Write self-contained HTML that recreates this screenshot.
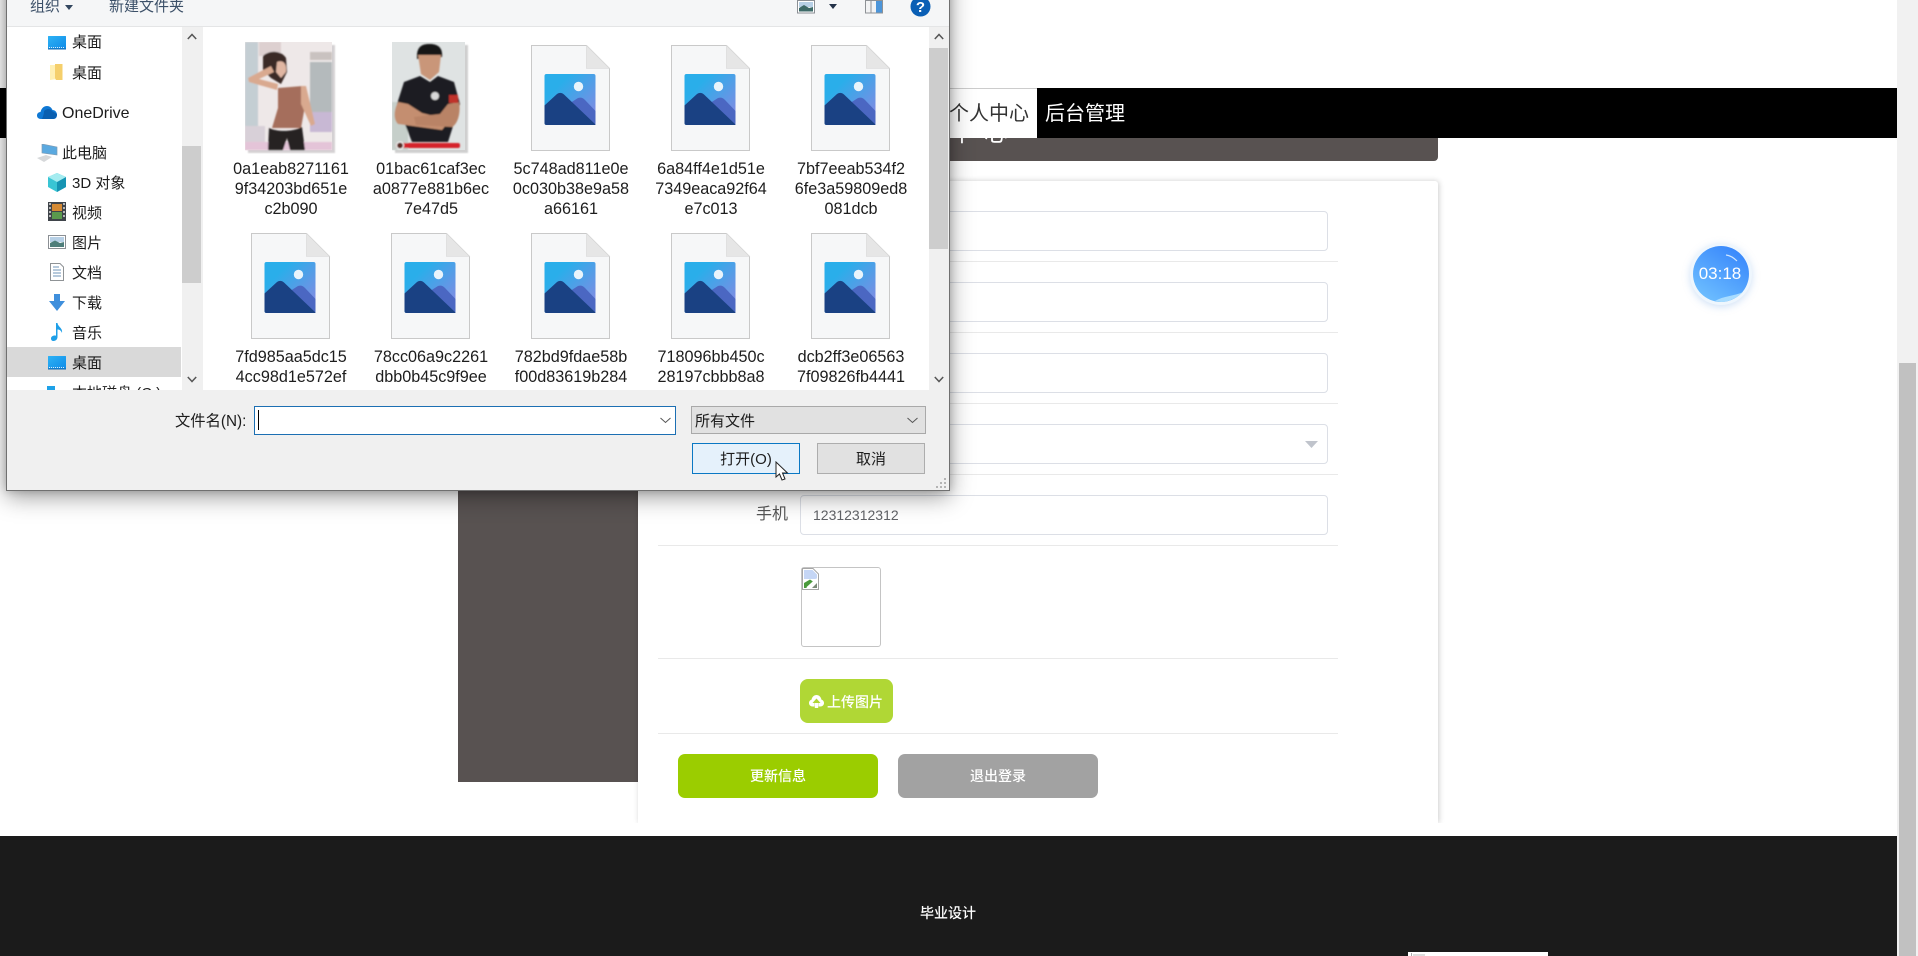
<!DOCTYPE html>
<html lang="zh"><head><meta charset="utf-8"><title>上传</title>
<style>
html,body{margin:0;padding:0;width:1918px;height:956px;overflow:hidden;background:#fff}
body{position:relative;font-family:"Liberation Sans","Noto Sans CJK SC",sans-serif;color:#222}
div,span,svg{position:absolute;box-sizing:border-box}
.t{white-space:nowrap}
.line{left:658px;width:680px;height:1px;background:#e9e9e9}
.inp{left:800px;width:528px;height:40px;border:1px solid #dcdfe6;border-radius:4px;background:#fff}
.side{left:72px;font-size:15px;line-height:22px;height:22px;color:#1c1c1c;white-space:nowrap}
.fn{width:140px;text-align:center;font-size:16.2px;line-height:20px;color:#1d1d1d;white-space:nowrap}
</style></head><body>
<svg width="0" height="0" style="left:0;top:0">
<defs>
<linearGradient id="sq" x1="0" y1="0" x2="1" y2="1"><stop offset=".25" stop-color="#2aaeea"/><stop offset="1" stop-color="#8f85e2"/></linearGradient>
<linearGradient id="dsk" x1="0" y1="0" x2="1" y2="1"><stop offset="0" stop-color="#2db2f5"/><stop offset="1" stop-color="#0f8be8"/></linearGradient>
<linearGradient id="tm" x1=".8" y1="0" x2=".15" y2="1"><stop offset="0" stop-color="#3685fb"/><stop offset="1" stop-color="#71c2ff"/></linearGradient>
<filter id="b1" x="-5%" y="-5%" width="110%" height="110%"><feGaussianBlur stdDeviation=".9"/></filter>
<symbol id="file" viewBox="0 0 80 106"><path d="M.5.5H55.5L78.5 23.5V105.5H.5Z" fill="#f6f7f8" stroke="#c9c9c9"/><path d="M55.5.5V23.5H78.5Z" fill="#e6e6e6" stroke="#d8d8d8" stroke-width=".6"/><rect x="13.500" y="29" width="51" height="51" rx="2" fill="url(#sq)"/><circle cx="47.500" cy="41.500" r="4.700" fill="#e9f4fb"/><path d="M47 53C50 52 52 53 54 55L64.500 66V78C64.500 79 64 80 62 80H50L36 60Z" fill="#4b67c2"/><path d="M13.500 60.500L26 49C28.500 47.500 30.500 47.500 33 49.500L64.500 79.500V80H15.500C14 80 13.500 79 13.500 78Z" fill="#1a4183"/></symbol>
<symbol id="desk" viewBox="0 0 18 14"><rect width="18" height="13" rx=".5" fill="url(#dsk)"/><path d="M1 11.500h16" stroke="#d4eeff" stroke-width="1" stroke-dasharray="1 1"/><rect y="12.400" width="18" height="1.100" fill="#1069b4"/></symbol>
</defs></svg>

<!-- page nav -->
<div style="left:0;top:88px;width:1897px;height:50px;background:#000"></div>
<div style="left:900px;top:88px;width:137px;height:50px;background:#fff;border-top:1px solid #ccc"></div>
<div class="t" style="left:949px;top:99px;font-size:20px;line-height:30px;color:#333">个人中心</div>
<div class="t" style="left:1045px;top:99px;font-size:20px;line-height:30px;color:#fff">后台管理</div>

<!-- header bar -->
<div style="left:458px;top:138px;width:980px;height:23px;background:#585251;border-radius:0 0 4px 4px;overflow:hidden">
  <div class="t" style="left:492px;top:-19px;font-size:24px;line-height:30px;letter-spacing:10px;color:#fff">中心</div>
</div>

<!-- dark column + card -->
<div style="left:458px;top:181px;width:181px;height:601px;background:#585251"></div>
<div style="left:638px;top:181px;width:800px;height:642px;background:#fff;border-radius:3px 3px 0 0;box-shadow:1px 0 6px rgba(0,0,0,.2);clip-path:inset(-10px -10px 0 -10px)"></div>

<div class="inp" style="top:211px"></div><div class="line" style="top:261px"></div>
<div class="inp" style="top:282px"></div><div class="line" style="top:332px"></div>
<div class="inp" style="top:353px"></div><div class="line" style="top:403px"></div>
<div class="inp" style="top:424px"></div><div class="line" style="top:474px"></div>
<svg style="left:1305px;top:441px" width="13" height="7"><path d="M0 0H13L6.500 7Z" fill="#c0c4cc"/></svg>
<div class="inp" style="top:495px"></div><div class="line" style="top:545px"></div>
<div class="t" style="left:756px;top:505px;font-size:16px;line-height:20px;color:#555">手机</div>
<div class="t" style="left:813px;top:505px;font-size:14px;line-height:20px;color:#606266">12312312312</div>

<div style="left:801px;top:567px;width:80px;height:80px;border:1px solid #c4c4c4;border-radius:3px;background:#fff"></div>
<svg style="left:802px;top:568px" width="18" height="22"><path d="M.5.500H11L16.500 6V21.500H.5Z" fill="#fff" stroke="#a6a6a6"/><path d="M2 2H10.500L15 6.500V11H2Z" fill="#c5d6f5"/><path d="M2 20V15L8 11.500L11 13.500L5 20Z" fill="#4a9a3c"/><path d="M10 20L15 15V20Z" fill="#7a8a78"/><path d="M5 20L15 11" stroke="#fff" stroke-width="2"/></svg>
<div class="line" style="top:658px"></div>

<div style="left:800px;top:679px;width:93px;height:44px;background:#b0d735;border-radius:8px"></div>
<svg style="left:809px;top:695px" width="15" height="13" viewBox="0 0 15 13"><path d="M3.500 11.500C1.500 11.500 0 10 0 8C0 6.300 1 5 2.500 4.700C3 2 5 0 7.500 0C10 0 12 2 12.500 4.700C14 5 15 6.300 15 8C15 10 13.500 11.500 11.500 11.500H9.500V8H11.500L7.500 3.500L3.500 8H5.500V11.500Z" fill="#fff"/><rect x="5.800" y="8" width="3.400" height="5" fill="#fff"/></svg>
<div class="t" style="left:827px;top:692px;font-size:14px;line-height:20px;color:#fff;font-weight:500">上传图片</div>
<div class="line" style="top:733px"></div>

<div style="left:678px;top:754px;width:200px;height:44px;background:#9bcd00;border-radius:7px;color:#fff;text-align:center;font-size:14px;line-height:44px;font-weight:500">更新信息</div>
<div style="left:898px;top:754px;width:200px;height:44px;background:#a2a2a2;border-radius:7px;color:#fff;text-align:center;font-size:14px;line-height:44px;font-weight:500">退出登录</div>

<!-- timer -->
<div style="left:1690px;top:243px;width:62px;height:62px;border-radius:50%;background:#fff;box-shadow:0 2px 8px rgba(120,170,230,.35);border:3px solid #eef6fd"></div>
<svg style="left:1693px;top:246px" width="56" height="56" viewBox="0 0 56 56"><circle cx="28" cy="28" r="28" fill="url(#tm)"/><path d="M33 9C37 9.500 41 12 44 15" stroke="#cfe6ff" stroke-width="1.200" fill="none"/><path d="M22 55C30 50 42 50 50 46C44 52 36 56 28 56Z" fill="#a8dcff"/></svg>
<div class="t" style="left:1690px;top:262px;width:60px;text-align:center;font-size:17px;line-height:24px;color:#fff">03:18</div>

<!-- footer -->
<div style="left:0;top:836px;width:1897px;height:120px;background:#1b1b1b"></div>
<div class="t" style="left:920px;top:903px;font-size:14px;line-height:20px;color:#fff;font-weight:500">毕业设计</div>
<div style="left:1408px;top:952px;width:140px;height:4px;background:#fff"></div>
<div style="left:1411px;top:953px;width:1px;height:3px;background:#aaa"></div>
<div style="left:1413px;top:954px;width:12px;height:2px;background:#ddd"></div>

<!-- page scrollbar -->
<div style="left:1897px;top:0;width:21px;height:956px;background:#f1f1f1"></div>
<div style="left:1899px;top:363px;width:17px;height:593px;background:#c1c1c1"></div>

<!-- DIALOG -->
<div style="left:6px;top:-60px;width:944px;height:551px;background:#f0f0f0;border:1px solid #707070;box-shadow:0 6px 22px rgba(0,0,0,.38),0 0 8px rgba(0,0,0,.2)"></div>
<div style="left:7px;top:0;width:942px;height:27px;background:#f5f6f7;border-bottom:1px solid #e4e5e6"></div>
<div class="t" style="left:30px;top:-4px;font-size:15px;line-height:22px;color:#3c5068">组织</div>
<svg style="left:65px;top:5px" width="8" height="5"><path d="M0 0H8L4 5Z" fill="#33475f"/></svg>
<div class="t" style="left:109px;top:-4px;font-size:15px;line-height:22px;color:#3c5068">新建文件夹</div>
<!-- view icon -->
<svg style="left:797px;top:0" width="18" height="14"><rect x=".5" y=".5" width="17" height="12.500" fill="#fff" stroke="#8b8f94"/><rect x="2" y="2" width="14" height="5" fill="#b7d0e6"/><path d="M2 8L7 5L12 8L16 7V11.500H2Z" fill="#3e6a68"/></svg>
<svg style="left:829px;top:4px" width="8" height="5"><path d="M0 0H8L4 5Z" fill="#233248"/></svg>
<!-- pane icon -->
<svg style="left:865px;top:0" width="18" height="14"><rect x=".5" y=".5" width="17" height="12.500" fill="#f2f3f4" stroke="#8e9296"/><rect x="11" y="1" width="6" height="11.500" fill="#4c95d9"/><path d="M6 0V13" stroke="#8e9296"/></svg>
<!-- help -->
<svg style="left:910px;top:-4px" width="21" height="21"><circle cx="10.500" cy="10.500" r="10" fill="#0a5fb5"/><text x="10.500" y="16" text-anchor="middle" font-family="Liberation Sans" font-size="15" font-weight="700" fill="#fff">?</text></svg>

<!-- tree pane -->
<div style="left:7px;top:27px;width:175px;height:363px;background:#fff;overflow:hidden">
  <div style="left:0;top:320px;width:174px;height:30px;background:#d9d9d9"></div>
</div>
<div style="left:182px;top:27px;width:19px;height:363px;background:#f0f0f0"></div>
<div style="left:182px;top:146px;width:19px;height:137px;background:#cdcdcd"></div>
<svg style="left:187px;top:33px" width="10" height="7"><path d="M.8 6L5 1.500L9.200 6" fill="none" stroke="#555" stroke-width="1.500"/></svg>
<svg style="left:187px;top:376px" width="10" height="7"><path d="M.8 1L5 5.500L9.200 1" fill="none" stroke="#555" stroke-width="1.500"/></svg>

<svg style="left:48px;top:36px" width="18" height="14"><use href="#desk"/></svg>
<div class="side" style="top:32px">桌面</div>
<svg style="left:50px;top:64px" width="13" height="17"><path d="M0 1H6L7 3V15L0 16Z" fill="#fff0b4"/><path d="M5 0H12.500V16H6L5 14Z" fill="#f5cf6b"/></svg>
<div class="side" style="top:63px">桌面</div>
<svg style="left:37px;top:105px" width="20" height="14" viewBox="0 0 20 14"><path d="M4 14C1.500 14 0 12.500 0 10.500C0 8.500 1.500 7 3.500 7C4.500 3 7 1 10 1C12.500 1 14.500 2.500 15.500 5C18 5 20 7 20 10C20 12.500 18.500 14 16.500 14Z" fill="#0f78d4"/><path d="M7 6C10 3 14 4 15 6L20 9C20 12 18 14 16 14H5C7 9 7 8 7 6Z" fill="#0a5fb0"/></svg>
<div class="t" style="left:62px;top:103px;font-size:16px;line-height:22px;color:#1c1c1c">OneDrive</div>
<svg style="left:37px;top:144px" width="21" height="18" viewBox="0 0 21 18"><path d="M5 0L20 3V11L5 9Z" fill="#5aa9e0" stroke="#7f9db5" stroke-width=".7"/><path d="M0 14L9 11L15 13L7 18Z" fill="#d6d8da"/></svg>
<div class="side" style="left:62px;top:143px">此电脑</div>
<svg style="left:48px;top:173px" width="18" height="19" viewBox="0 0 18 19"><path d="M9 0L18 4V14L9 19L0 14V4Z" fill="#39c5d4"/><path d="M9 9L18 4V14L9 19Z" fill="#1694b3"/><path d="M9 0L18 4L9 9L0 4Z" fill="#a5ecf0"/></svg>
<div class="side" style="top:173px">3D 对象</div>
<svg style="left:48px;top:202px" width="18" height="19"><rect width="18" height="19" fill="#3f444a"/><rect x="4" y="2" width="10" height="7" fill="#d58a34"/><rect x="4" y="10" width="10" height="7" fill="#5a9a4d"/><path d="M1 2h2M1 6h2M1 10h2M1 14h2M15 2h2M15 6h2M15 10h2M15 14h2" stroke="#ddd" stroke-width="1.500"/></svg>
<div class="side" style="top:203px">视频</div>
<svg style="left:48px;top:235px" width="18" height="14"><rect x=".5" y=".5" width="17" height="13" fill="#fff" stroke="#8b8f94"/><rect x="2" y="2" width="14" height="5" fill="#b7d0e6"/><path d="M2 8L7 5.500L12 8L16 7V12H2Z" fill="#4e7e7a"/></svg>
<div class="side" style="top:233px">图片</div>
<svg style="left:50px;top:263px" width="14" height="18"><path d="M.5.500H10L13.500 4V17.500H.5Z" fill="#fff" stroke="#8f9396"/><path d="M3 4h6M3 7h8M3 10h8M3 13h8" stroke="#6f96b8"/></svg>
<div class="side" style="top:263px">文档</div>
<svg style="left:49px;top:294px" width="16" height="17"><path d="M5 0H11V7H16L8 17L0 7H5Z" fill="#3f8fdc"/></svg>
<div class="side" style="top:293px">下载</div>
<svg style="left:51px;top:323px" width="12" height="18"><path d="M5 0H6.500C7 4 12 5 11 10C10 7 8 6.500 6.500 6.500V14C6.500 16.500 4.500 18 2.500 18C1 18 0 17 0 15.500C0 13.500 2.500 12 5 12.700Z" fill="#1e9fe8"/></svg>
<div class="side" style="top:323px">音乐</div>
<svg style="left:48px;top:356px" width="18" height="14"><use href="#desk"/></svg>
<div class="side" style="top:353px">桌面</div>
<div style="left:7px;top:380px;width:175px;height:10px;overflow:hidden">
  <div class="side" style="left:65px;top:3px">本地磁盘 (C:)</div>
  <div style="left:40px;top:6px;width:8px;height:4px;background:#1ea1e8"></div>
</div>

<!-- file pane -->
<div style="left:203px;top:27px;width:726px;height:363px;background:#fff;overflow:hidden">
  <!-- thumb 1 -->
  <svg style="left:42px;top:15px" width="92" height="112" viewBox="0 0 92 112">
    <rect x="3" y="3" width="87" height="108" fill="#b9b4b6" opacity=".6" filter="url(#b1)"/>
    <rect width="87" height="108" fill="#eee8e8"/>
    <g filter="url(#b1)">
    <rect x="0" y="0" width="13" height="84" fill="#c4ced3"/>
    <rect x="14" y="0" width="22" height="14" fill="#ddd0d0"/>
    <rect x="65" y="20" width="22" height="50" fill="#b4babc"/>
    <rect x="65" y="10" width="22" height="8" fill="#c9c2c0"/>
    <rect x="65" y="70" width="22" height="20" fill="#c8b8d4"/>
    <rect x="0" y="84" width="20" height="24" fill="#d8d0d8"/>
    <rect x="0" y="100" width="87" height="8" fill="#e4c4d8"/>
    <path d="M33 46L58 44L60 64L56 86H27L33 66Z" fill="#a56e5b"/>
    <path d="M18 14C24 8 36 8 41 16L42 30L36 42L26 36L18 28Z" fill="#3b2a28"/>
    <path d="M32 20C37 18 42 20 41 30L36 36L31 30Z" fill="#e0b6a2"/>
    <path d="M26 24L3 36L4 40L32 48L33 42L14 37L29 30Z" fill="#d9a98f"/>
    <path d="M56 44L61 44L70 82L66 84L56 62Z" fill="#d9a98f"/>
    <path d="M24 86C32 90 48 90 57 85L60 108H45L42 96L38 108H23Z" fill="#262122"/>
    </g>
  </svg>
  <!-- thumb 2 -->
  <svg style="left:189px;top:15px" width="78" height="112" viewBox="0 0 78 112">
    <rect x="3" y="3" width="73" height="108" fill="#b0b0b0" opacity=".6" filter="url(#b1)"/>
    <rect width="73" height="108" fill="#dfe3e3"/>
    <g filter="url(#b1)">
    <rect x="0" y="60" width="16" height="48" fill="#c6cfca"/>
    <path d="M25 12C26 3 32 2 38 2C45 2 51 5 50 15L25 17Z" fill="#181818"/>
    <path d="M26 13H49L47 30L38 38L29 32Z" fill="#c99679"/>
    <path d="M28 34L12 40L5 62L20 100H56L68 62L62 40L46 34L38 40Z" fill="#1d1e20"/>
    <path d="M6 60C1 70 2 78 6 82L50 88L58 78L30 71L16 62Z" fill="#c48e6f"/>
    <path d="M67 60C69 70 66 82 60 85L24 83L22 75L48 72L56 62Z" fill="#b98366"/>
    <rect x="57" y="53" width="9" height="8" fill="#c0302a"/>
    <circle cx="43" cy="54" r="4" fill="#d8d8d8"/>
    <rect x="4" y="101" width="64" height="5" rx="2" fill="#d5242a"/>
    <circle cx="8" cy="103.500" r="3.500" fill="#5b2a22" stroke="#fff"/>
    </g>
  </svg>
  <!-- files row 1 -->
  <svg style="left:328px;top:18px" width="80" height="106"><use href="#file"/></svg>
  <svg style="left:468px;top:18px" width="80" height="106"><use href="#file"/></svg>
  <svg style="left:608px;top:18px" width="80" height="106"><use href="#file"/></svg>
  <!-- files row 2 -->
  <svg style="left:48px;top:206px" width="80" height="106"><use href="#file"/></svg>
  <svg style="left:188px;top:206px" width="80" height="106"><use href="#file"/></svg>
  <svg style="left:328px;top:206px" width="80" height="106"><use href="#file"/></svg>
  <svg style="left:468px;top:206px" width="80" height="106"><use href="#file"/></svg>
  <svg style="left:608px;top:206px" width="80" height="106"><use href="#file"/></svg>
  <!-- names -->
  <div class="fn" style="left:18px;top:132px">0a1eab8271161<br>9f34203bd651e<br>c2b090</div>
  <div class="fn" style="left:158px;top:132px">01bac61caf3ec<br>a0877e881b6ec<br>7e47d5</div>
  <div class="fn" style="left:298px;top:132px">5c748ad811e0e<br>0c030b38e9a58<br>a66161</div>
  <div class="fn" style="left:438px;top:132px">6a84ff4e1d51e<br>7349eaca92f64<br>e7c013</div>
  <div class="fn" style="left:578px;top:132px">7bf7eeab534f2<br>6fe3a59809ed8<br>081dcb</div>
  <div class="fn" style="left:18px;top:320px">7fd985aa5dc15<br>4cc98d1e572ef</div>
  <div class="fn" style="left:158px;top:320px">78cc06a9c2261<br>dbb0b45c9f9ee</div>
  <div class="fn" style="left:298px;top:320px">782bd9fdae58b<br>f00d83619b284</div>
  <div class="fn" style="left:438px;top:320px">718096bb450c<br>28197cbbb8a8</div>
  <div class="fn" style="left:578px;top:320px">dcb2ff3e06563<br>7f09826fb4441</div>
</div>
<div style="left:929px;top:27px;width:20px;height:363px;background:#f0f0f0"></div>
<div style="left:929px;top:48px;width:19px;height:201px;background:#cdcdcd"></div>
<svg style="left:934px;top:33px" width="10" height="7"><path d="M.8 6L5 1.500L9.200 6" fill="none" stroke="#555" stroke-width="1.500"/></svg>
<svg style="left:934px;top:376px" width="10" height="7"><path d="M.8 1L5 5.500L9.200 1" fill="none" stroke="#555" stroke-width="1.500"/></svg>

<!-- bottom controls -->
<div class="t" style="left:175px;top:411px;font-size:15.3px;line-height:22px;color:#1c1c1c">文件名(N):</div>
<div style="left:254px;top:406px;width:422px;height:29px;background:#fff;border:1px solid #1c6fb3"></div>
<div style="left:258px;top:410px;width:1px;height:20px;background:#000"></div>
<svg style="left:660px;top:417px" width="11" height="7"><path d="M.5 1L5.500 5.500L10.500 1" fill="none" stroke="#555"/></svg>
<div style="left:691px;top:406px;width:235px;height:28px;background:#e1e1e1;border:1px solid #a9a9a9"></div>
<div class="t" style="left:695px;top:411px;font-size:15px;line-height:22px;color:#1c1c1c">所有文件</div>
<svg style="left:907px;top:417px" width="11" height="7"><path d="M.5 1L5.500 5.500L10.500 1" fill="none" stroke="#555"/></svg>
<div style="left:692px;top:443px;width:108px;height:31px;background:#e5f1fb;border:1px solid #0a78c4;text-align:center;font-size:15px;line-height:31px;color:#1c1c1c">打开(O)</div>
<div style="left:817px;top:443px;width:108px;height:31px;background:#e1e1e1;border:1px solid #adadad;text-align:center;font-size:15px;line-height:31px;color:#1c1c1c">取消</div>
<svg style="left:775px;top:461px" width="14" height="21"><path d="M1 1V16L4.500 13L7 19L10 18L7.500 12H12.500Z" fill="#fff" stroke="#222" stroke-width="1"/></svg>
<svg style="left:935px;top:477px" width="12" height="12"><path d="M9 1h2v2h-2zM5 5h2v2h-2zM9 5h2v2h-2zM1 9h2v2h-2zM5 9h2v2h-2zM9 9h2v2h-2z" fill="#b4b4b4"/></svg>
</body></html>
